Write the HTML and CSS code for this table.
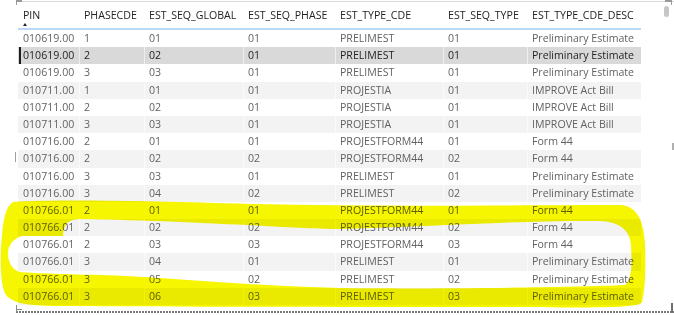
FILE: index.html
```html
<!DOCTYPE html>
<html>
<head>
<meta charset="utf-8">
<link rel="stylesheet" href="styles.css">
</head>
<body>
<div class="page">
  <div class="visual">
    <div class="table">
      <div class="row head">
        <div class="cell pin-head"><span>PIN</span><i class="sort"></i></div>
        <div class="cell">PHASECDE</div>
        <div class="cell">EST_SEQ_GLOBAL</div>
        <div class="cell">EST_SEQ_PHASE</div>
        <div class="cell">EST_TYPE_CDE</div>
        <div class="cell">EST_SEQ_TYPE</div>
        <div class="cell">EST_TYPE_CDE_DESC</div>
      </div>
      <div class="body">
        <div class="row"><div class="cell">010619.00</div><div class="cell">1</div><div class="cell">01</div><div class="cell">01</div><div class="cell">PRELIMEST</div><div class="cell">01</div><div class="cell">Preliminary Estimate</div></div>
        <div class="row sel"><div class="cell">010619.00</div><div class="cell">2</div><div class="cell">02</div><div class="cell">01</div><div class="cell">PRELIMEST</div><div class="cell">01</div><div class="cell">Preliminary Estimate</div></div>
        <div class="row"><div class="cell">010619.00</div><div class="cell">3</div><div class="cell">03</div><div class="cell">01</div><div class="cell">PRELIMEST</div><div class="cell">01</div><div class="cell">Preliminary Estimate</div></div>
        <div class="row"><div class="cell">010711.00</div><div class="cell">1</div><div class="cell">01</div><div class="cell">01</div><div class="cell">PROJESTIA</div><div class="cell">01</div><div class="cell">IMPROVE Act Bill</div></div>
        <div class="row"><div class="cell">010711.00</div><div class="cell">2</div><div class="cell">02</div><div class="cell">01</div><div class="cell">PROJESTIA</div><div class="cell">01</div><div class="cell">IMPROVE Act Bill</div></div>
        <div class="row"><div class="cell">010711.00</div><div class="cell">3</div><div class="cell">03</div><div class="cell">01</div><div class="cell">PROJESTIA</div><div class="cell">01</div><div class="cell">IMPROVE Act Bill</div></div>
        <div class="row"><div class="cell">010716.00</div><div class="cell">2</div><div class="cell">01</div><div class="cell">01</div><div class="cell">PROJESTFORM44</div><div class="cell">01</div><div class="cell">Form 44</div></div>
        <div class="row"><div class="cell">010716.00</div><div class="cell">2</div><div class="cell">02</div><div class="cell">02</div><div class="cell">PROJESTFORM44</div><div class="cell">02</div><div class="cell">Form 44</div></div>
        <div class="row"><div class="cell">010716.00</div><div class="cell">3</div><div class="cell">03</div><div class="cell">01</div><div class="cell">PRELIMEST</div><div class="cell">01</div><div class="cell">Preliminary Estimate</div></div>
        <div class="row"><div class="cell">010716.00</div><div class="cell">3</div><div class="cell">04</div><div class="cell">02</div><div class="cell">PRELIMEST</div><div class="cell">02</div><div class="cell">Preliminary Estimate</div></div>
        <div class="row"><div class="cell">010766.01</div><div class="cell">2</div><div class="cell">01</div><div class="cell">01</div><div class="cell">PROJESTFORM44</div><div class="cell">01</div><div class="cell">Form 44</div></div>
        <div class="row"><div class="cell">010766.01</div><div class="cell">2</div><div class="cell">02</div><div class="cell">02</div><div class="cell">PROJESTFORM44</div><div class="cell">02</div><div class="cell">Form 44</div></div>
        <div class="row"><div class="cell">010766.01</div><div class="cell">2</div><div class="cell">03</div><div class="cell">03</div><div class="cell">PROJESTFORM44</div><div class="cell">03</div><div class="cell">Form 44</div></div>
        <div class="row"><div class="cell">010766.01</div><div class="cell">3</div><div class="cell">04</div><div class="cell">01</div><div class="cell">PRELIMEST</div><div class="cell">01</div><div class="cell">Preliminary Estimate</div></div>
        <div class="row"><div class="cell">010766.01</div><div class="cell">3</div><div class="cell">05</div><div class="cell">02</div><div class="cell">PRELIMEST</div><div class="cell">02</div><div class="cell">Preliminary Estimate</div></div>
        <div class="row"><div class="cell">010766.01</div><div class="cell">3</div><div class="cell">06</div><div class="cell">03</div><div class="cell">PRELIMEST</div><div class="cell">03</div><div class="cell">Preliminary Estimate</div></div>
      </div>
    </div>
    <div class="dots"></div>
  </div>

  <span class="mark tl-v"></span><span class="mark tl-h"></span>
  <span class="mark tr-h"></span><span class="mark tr-v"></span>
  <span class="mark bl-v"></span><span class="mark bl-h"></span>
  <span class="mark br-v"></span>
  <span class="mark left-tick"></span>
  <span class="mark right-tick"></span>
  <span class="thumb"></span>

  <svg class="marker" width="674" height="315" viewBox="0 0 674 315">
    <path fill-rule="evenodd" d="
      M 13 202
      C 60 199, 150 201, 250 204
      C 380 207, 520 205, 620 205
      C 638 206, 644 222, 645 245
      C 646 270, 645 290, 642 302
      C 640 308, 600 308, 500 307
      C 380 307, 200 307, 60 306
      C 22 306, 8 302, 4 291
      C 0 278, 0 252, 2 236
      C 3 220, 6 206, 13 202 Z
      M 22 236
      L 63 236
      C 64 225, 66 220, 80 219
      C 200 221, 300 229, 340 229
      C 450 226, 530 220, 600 221
      C 622 222, 630 232, 631 245
      C 632 265, 632 280, 625 285
      C 560 288, 400 289, 340 288
      C 250 286, 150 276, 100 275
      C 60 274, 30 273, 20 272
      C 12 270, 8 262, 8 253
      C 8 245, 14 238, 22 236 Z"/>
  </svg>
</div>
</body>
</html>
```

FILE: styles.css
```css
html, body {
  margin: 0;
  padding: 0;
  background: #ffffff;
}

.page {
  position: relative;
  width: 674px;
  height: 315px;
  overflow: hidden;
  font-family: "Open Sans", "Noto Sans", "DejaVu Sans", sans-serif;
  font-size: 10.6px;
}

.visual {
  margin: 1px 0 0 16px;
  width: 658px;
  border-top: 1px solid #dadada;
}

.table {
  margin-left: 2px;
  width: 623px;
}

.row {
  display: grid;
  grid-template-columns: 61px 65px 99px 92px 108px 84px 114px;
  height: 17.2px;
}

.cell {
  padding-left: 4px;
  border-left: 1px solid rgba(255, 255, 255, 0.55);
  line-height: 17.2px;
  color: #626262;
  white-space: nowrap;
  overflow: hidden;
}

.row .cell:first-child {
  border-left: 0;
  padding-left: 5px;
}

.row.head {
  height: 26px;
  border-bottom: 2px solid #b9d9f5;
}

.row.head .cell {
  color: #252423;
  line-height: 13px;
  padding-top: 7px;
  border-left-color: transparent;
}

.pin-head {
  display: flex;
  flex-direction: column;
  align-items: flex-start;
}

.sort {
  display: block;
  width: 0;
  height: 0;
  margin-top: 1px;
  border-left: 2.5px solid transparent;
  border-right: 2.5px solid transparent;
  border-bottom: 3px solid #222222;
}

.body .row:nth-child(even) {
  background: #f3f3f3;
}

.body .row.sel {
  background: #d9d9d9;
  box-shadow: inset 1px 0 0 #d9d9d9, inset 3px 0 0 #1e1e1e;
}

.body .row.sel .cell {
  color: #252423;
}

.dots {
  margin-top: 6px;
  height: 2px;
  background: repeating-linear-gradient(90deg, #7a7a7a 0 2px, transparent 2px 3px);
}

.mark {
  position: absolute;
  background: #9a9a9a;
}

.tl-v { left: 16px; top: 0; width: 1px; height: 5px; }
.tl-h { left: 16px; top: 0; width: 6px; height: 2px; }
.tr-h { left: 665px; top: 0; width: 7px; height: 2px; }
.tr-v { left: 671px; top: 0; width: 1px; height: 5px; }
.bl-v { left: 16px; top: 305px; width: 1px; height: 7px; background: #8a8a8a; }
.bl-h { left: 16px; top: 309px; width: 6px; height: 1px; background: #8a8a8a; }
.br-v { left: 671px; top: 303px; width: 2px; height: 10px; background: #6f6f6f; }
.left-tick { left: 15px; top: 152px; width: 1px; height: 10px; background: #a0a0a0; }
.right-tick { left: 672px; top: 143px; width: 2px; height: 7px; background: #b0b0b0; }

.thumb {
  position: absolute;
  left: 664px;
  top: 6px;
  width: 5px;
  height: 11px;
  border-radius: 3px;
  background: #c6c6c6;
}

.marker {
  position: absolute;
  left: 0;
  top: 0;
  pointer-events: none;
  mix-blend-mode: multiply;
}

.marker path {
  fill: #f6f600;
}
```
